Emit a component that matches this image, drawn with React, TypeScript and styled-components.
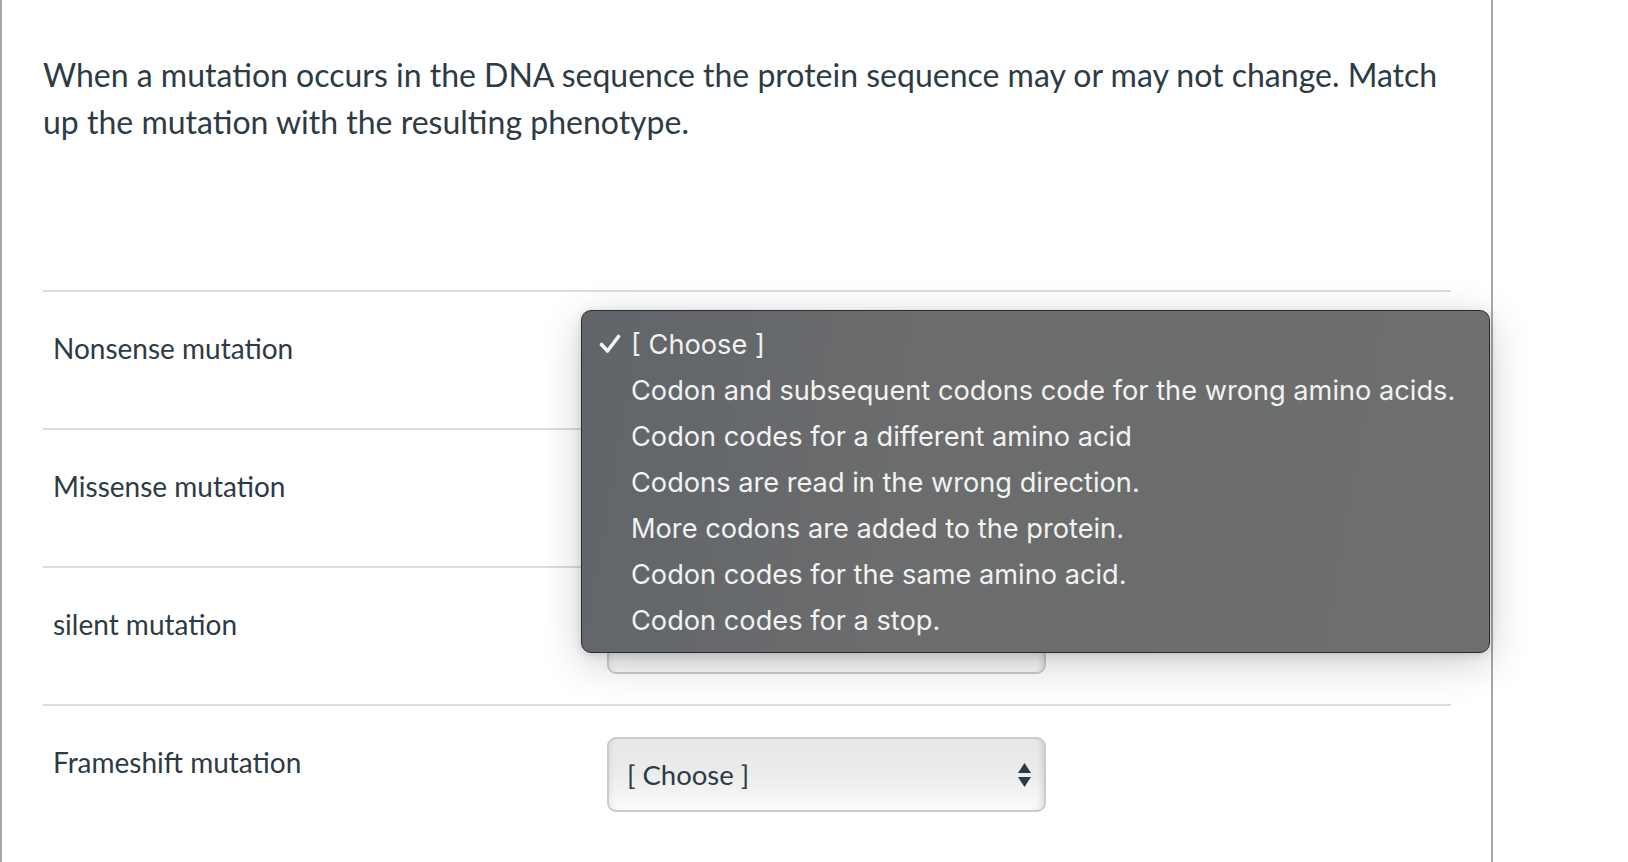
import React from "react";
import styled, { createGlobalStyle } from "styled-components";

const GlobalStyle = createGlobalStyle`
    html, body {
        margin: 0;
        padding: 0;
        background: #fff;
    }
    body {
        font-family: Lato, "Liberation Sans", sans-serif;
        color: #2d3b45;
    }
`;

const rows = ["Nonsense mutation", "Missense mutation", "silent mutation", "Frameshift mutation"];

const options = [
    "[ Choose ]",
    "Codon and subsequent codons code for the wrong amino acids.",
    "Codon codes for a different amino acid",
    "Codons are read in the wrong direction.",
    "More codons are added to the protein.",
    "Codon codes for the same amino acid.",
    "Codon codes for a stop.",
];

const ArrowIcon = () => (
    <svg width="13" height="24" viewBox="0 0 13 24">
        <polygon points="6.5,0 13,10 0,10" fill="#2d3b45" />
        <polygon points="0,14 13,14 6.5,24" fill="#2d3b45" />
    </svg>
);

const CheckIcon = () => (
    <svg width="22" height="20" viewBox="0 0 22 20">
        <polyline points="2.5,10.5 8.5,17 19.5,2.5" fill="none" stroke="#f4f4f4" strokeWidth="3.6" strokeLinecap="round" strokeLinejoin="round" />
    </svg>
);

// the open popup (macOS style) covers the first three selects
const OPEN_ROW = 0;

const App = () => {
    return (
        <>
            <GlobalStyle />
            <Panel>
                <Question>
                    When a mutation occurs in the DNA sequence the protein sequence may or may not change. Match up the
                    mutation with the resulting phenotype.
                </Question>
                <Answers>
                    {rows.map((label, i) => (
                        <Row key={label}>
                            <Label>{label}</Label>
                            <SelectCell>
                                <Select $covered={i < 3}>
                                    <span>[ Choose ]</span>
                                    <ArrowIcon />
                                </Select>
                                {i === OPEN_ROW && (
                                    <Popup>
                                        {options.map((opt, j) => (
                                            <Option key={opt}>
                                                <Check>{j === 0 && <CheckIcon />}</Check>
                                                {opt}
                                            </Option>
                                        ))}
                                    </Popup>
                                )}
                            </SelectCell>
                        </Row>
                    ))}
                </Answers>
            </Panel>
        </>
    );
};

export default App;

const Panel = styled.div`
    box-sizing: border-box;
    width: 1493px;
    min-height: 862px;
    border-left: 2px solid #a8a8a8;
    border-right: 2px solid #a8a8a8;
    padding: 51px 40px 0 41px;
`;

const Question = styled.p`
    margin: 0;
    font-size: 32px;
    line-height: 47px;
    color: #2d3b45;
`;

const Answers = styled.div`
    margin-top: 145px;
`;

const Row = styled.div`
    display: grid;
    grid-template-columns: 554px 439px;
    align-items: start;
    height: 138px;
    box-sizing: border-box;
    border-top: 2px solid #dcdcdc;
    padding: 31px 0 0 10px;
`;

const Label = styled.div`
    font-size: 28px;
    line-height: 38px;
    margin-top: 6px;
    color: #2d3b45;
`;

const SelectCell = styled.div`
    position: relative;
`;

const Select = styled.div<{ $covered?: boolean }>`
    box-sizing: border-box;
    height: 75px;
    display: flex;
    align-items: center;
    justify-content: space-between;
    padding: 0 13px 0 18px;
    border: 2px solid #cbcbcb;
    border-radius: 9px;
    background: linear-gradient(#e8e8e8 0%, #ebebeb 45%, #f3f3f3 75%, #fbfbfb 100%);
    box-shadow: inset -6px 0 6px -4px rgba(0, 0, 0, 0.12), inset 6px 0 6px -5px rgba(0, 0, 0, 0.08);
    font-size: 27.5px;
    color: #2d3b45;

    & > * {
        visibility: ${props => (props.$covered ? "hidden" : "visible")};
    }
`;

const Popup = styled.div`
    position: absolute;
    left: -26px;
    top: -13px;
    z-index: 5;
    box-sizing: border-box;
    width: 909px;
    padding: 10px 0 9px;
    border: 1px solid #2b2b2b;
    border-radius: 10px;
    background: linear-gradient(100deg, #616469 0%, #6a6c6d 35%, #6e6f6e 100%);
    box-shadow: 0 10px 40px rgba(0, 0, 0, 0.2), 0 2px 8px rgba(0, 0, 0, 0.12);
`;

const Option = styled.div`
    display: flex;
    align-items: center;
    height: 46px;
    padding-left: 17px;
    font-family: Inter, "Liberation Sans", sans-serif;
    font-size: 27.2px;
    color: #f2f2f2;
    white-space: nowrap;
`;

const Check = styled.span`
    display: inline-flex;
    width: 32px;
`;
